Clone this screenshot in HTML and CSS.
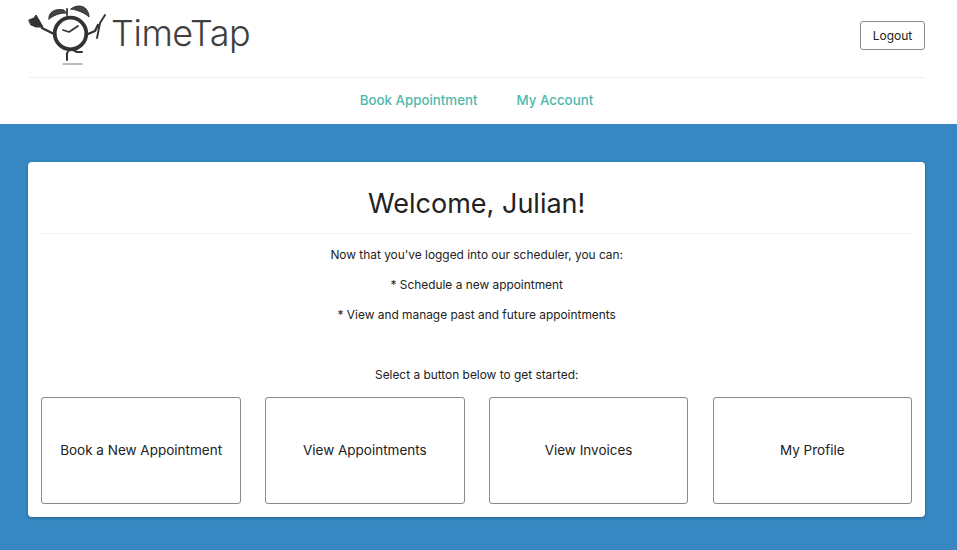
FILE: index.html
```html
<!DOCTYPE html>
<html lang="en">
<head>
    <meta charset="UTF-8">
    <meta name="viewport" content="width=device-width, initial-scale=1.0">
    <title>TimeTap</title>
    <link rel="stylesheet" href="styles.css">
</head>
<body>
    <header class="site-header">
        <div class="top-bar">
            <a class="logo" href="#">
                <svg class="logo-icon" width="80" height="66" viewBox="0 0 80 66" fill="none" stroke="#333" stroke-linecap="round" stroke-linejoin="round">
                    <circle cx="42.5" cy="33.5" r="15.8" stroke-width="3.8"/>
                    <path d="M21 19 C20 13 26 8 36 10 L38 13 C32 13 26 15 21 19 Z" fill="#444" stroke-width="1"/>
                    <path d="M43 9 C47 5 55 5 58 9 C60 11 61 14 61 17 C57 13 50 10 43 9 Z" fill="#444" stroke-width="1"/>
                    <path d="M39 15 L39 9" stroke-width="1.8"/>
                    <path d="M35 30 L41 32 L50 26" stroke-width="1.7"/>
                    <path d="M1 20 L6 18 L8 15 L11 20 L15 27 L8 27 L3 25 Z" fill="#333" stroke-width="1"/>
                    <path d="M14 28 L25 33.5" stroke-width="2.4"/>
                    <path d="M60 34 L67 31 L70 25" stroke-width="2.4"/>
                    <path d="M69 38 L72 23 L77 15" stroke-width="1.9"/>
                    <path d="M42 49 L39 53 L39 60" stroke-width="2"/>
                    <path d="M45 50 L49 52 L54 52" stroke-width="2"/>
                    <path d="M35 64 L54 64" stroke-width="1.2" stroke="#777"/>
                </svg>
                <span class="logo-text">TimeTap</span>
            </a>
            <button class="logout-btn">Logout</button>
        </div>
        <nav class="main-nav">
            <a href="#">Book Appointment</a>
            <a href="#">My Account</a>
        </nav>
    </header>

    <main class="page">
        <section class="card">
            <h1>Welcome, Julian!</h1>
            <div class="intro">
                <p>Now that you've logged into our scheduler, you can:</p>
                <p>* Schedule a new appointment</p>
                <p>* View and manage past and future appointments</p>
                <p class="prompt">Select a button below to get started:</p>
            </div>
            <div class="actions">
                <a class="action" href="#">Book a New Appointment</a>
                <a class="action" href="#">View Appointments</a>
                <a class="action" href="#">View Invoices</a>
                <a class="action" href="#">My Profile</a>
            </div>
        </section>
    </main>
</body>
</html>
```

FILE: styles.css
```css
* {
    margin: 0;
    padding: 0;
    box-sizing: border-box;
}

body {
    font-family: 'Inter', 'Liberation Sans', sans-serif;
    background: #3687c2;
    color: #222222;
    height: 550px;
    overflow: hidden;
}

a {
    text-decoration: none;
}

.site-header {
    background: #ffffff;
    padding: 0 32px 0 28px;
    height: 124px;
}

.top-bar {
    display: flex;
    align-items: flex-start;
    justify-content: space-between;
    height: 78px;
    border-bottom: 1px solid #f0f0f0;
}

.logo {
    display: flex;
    align-items: flex-start;
    color: #3f3f3f;
}

.logo-icon {
    display: block;
}

.logo-text {
    font-weight: 300;
    font-size: 36px;
    line-height: 44px;
    letter-spacing: -0.45px;
    margin-left: 3px;
    margin-top: 11px;
}

.logout-btn {
    width: 65px;
    height: 29px;
    margin-top: 21px;
    background: #ffffff;
    border: 1px solid #8a8a8a;
    border-radius: 3px;
    color: #222222;
    font-family: inherit;
    font-size: 12px;
}

.main-nav {
    display: flex;
    justify-content: center;
    gap: 39px;
    padding-top: 12px;
    font-size: 13.3px;
    line-height: 20px;
}

.main-nav a {
    color: #4fb8ae;
    font-weight: 500;
}

.page {
    padding: 38px 32px 0 28px;
}

.card {
    background: #ffffff;
    border-radius: 4px;
    height: 355px;
    padding: 0 13px 0 13.4px;
    box-shadow: 0 1px 3px rgba(0, 0, 0, 0.3);
}

.card h1 {
    height: 72px;
    border-bottom: 1px solid #f0f0f0;
    font-size: 27px;
    font-weight: 400;
    line-height: 84px;
    text-align: center;
    color: #222222;
}

.intro {
    padding-top: 11px;
    text-align: center;
    font-size: 11.9px;
    line-height: 20px;
}

.intro p {
    margin-bottom: 10px;
}

.intro .prompt {
    margin-top: 40px;
    margin-bottom: 12px;
}

.actions {
    display: grid;
    grid-template-columns: repeat(4, 1fr);
    gap: 24.3px;
}

.action {
    height: 107px;
    display: flex;
    align-items: center;
    justify-content: center;
    padding-bottom: 2px;
    background: #ffffff;
    border: 1px solid #8a8a8a;
    border-radius: 3px;
    color: #222222;
    font-size: 13.5px;
}
```
